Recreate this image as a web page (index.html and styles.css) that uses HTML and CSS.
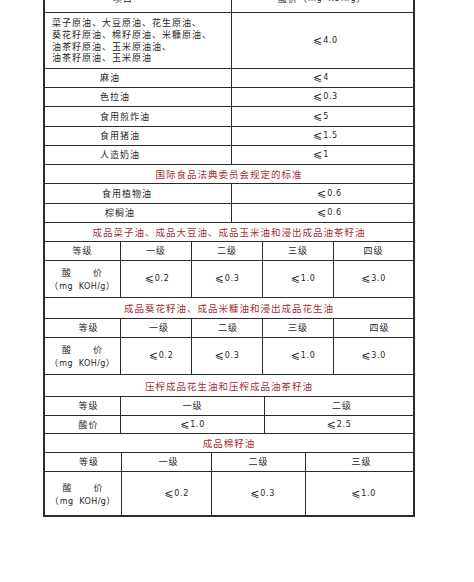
FILE: index.html
```html
<!DOCTYPE html>
<html lang="zh-CN">
<head>
<meta charset="utf-8">
<title>食用油酸价标准</title>
<link rel="stylesheet" href="styles.css">
</head>
<body>
<div class="sheet">
  <div class="row two h27">
    <div class="c l p68">项目</div>
    <div class="c l p46">酸价（<span class="n">mg&nbsp;&nbsp;KOH/g</span>）</div>
  </div>
  <div class="row two h56">
    <div class="c l p7 multi">菜子原油、大豆原油、花生原油、<br>葵花籽原油、棉籽原油、米糠原油、<br>油茶籽原油、玉米原油油、<br>油茶籽原油、玉米原油</div>
    <div class="c l p81 n"><span class="le">⩽</span>4.0</div>
  </div>
  <div class="row two h19">
    <div class="c l p55">麻油</div>
    <div class="c l p81 n"><span class="le">⩽</span>4</div>
  </div>
  <div class="row two h19">
    <div class="c l p55">色拉油</div>
    <div class="c l p81 n"><span class="le">⩽</span>0.3</div>
  </div>
  <div class="row two h20">
    <div class="c l p55">食用煎炸油</div>
    <div class="c l p81 n"><span class="le">⩽</span>5</div>
  </div>
  <div class="row two h19">
    <div class="c l p55">食用猪油</div>
    <div class="c l p81 n"><span class="le">⩽</span>1.5</div>
  </div>
  <div class="row two h19">
    <div class="c l p55">人造奶油</div>
    <div class="c l p81 n"><span class="le">⩽</span>1</div>
  </div>
  <div class="row one h19">
    <div class="c red">国际食品法典委员会规定的标准</div>
  </div>
  <div class="row two h20">
    <div class="c l p57">食用植物油</div>
    <div class="c l p85 n"><span class="le">⩽</span>0.6</div>
  </div>
  <div class="row two h19">
    <div class="c l p60">棕榈油</div>
    <div class="c l p85 n"><span class="le">⩽</span>0.6</div>
  </div>
  <div class="row one h19">
    <div class="c red">成品菜子油、成品大豆油、成品玉米油和浸出成品油茶籽油</div>
  </div>
  <div class="row five h19">
    <div class="c">等级</div>
    <div class="c">一级</div>
    <div class="c">二级</div>
    <div class="c">三级</div>
    <div class="c">四级</div>
  </div>
  <div class="row five h37">
    <div class="c acid"><span>酸<i class="gap"></i>价</span><span>（<span class="n">mg&nbsp;&nbsp;KOH/g</span>）</span></div>
    <div class="c n r2"><span class="le">⩽</span>0.2</div>
    <div class="c n"><span class="le">⩽</span>0.3</div>
    <div class="c n r10"><span class="le">⩽</span>1.0</div>
    <div class="c n"><span class="le">⩽</span>3.0</div>
  </div>
  <div class="row one h21">
    <div class="c red">成品葵花籽油、成品米糠油和浸出成品花生油</div>
  </div>
  <div class="row five h19">
    <div class="c r12">等级</div>
    <div class="c r6">一级</div>
    <div class="c r2">二级</div>
    <div class="c">三级</div>
    <div class="c r12">四级</div>
  </div>
  <div class="row five h37">
    <div class="c acid"><span>酸<i class="gap"></i>价</span><span>（<span class="n">mg&nbsp;&nbsp;KOH/g</span>）</span></div>
    <div class="c n r10"><span class="le">⩽</span>0.2</div>
    <div class="c n"><span class="le">⩽</span>0.3</div>
    <div class="c n r10"><span class="le">⩽</span>1.0</div>
    <div class="c n"><span class="le">⩽</span>3.0</div>
  </div>
  <div class="row one h22">
    <div class="c red">压榨成品花生油和压榨成品油茶籽油</div>
  </div>
  <div class="row three h19">
    <div class="c r12">等级</div>
    <div class="c">一级</div>
    <div class="c r6">二级</div>
  </div>
  <div class="row three h18">
    <div class="c r12">酸价</div>
    <div class="c n"><span class="le">⩽</span>1.0</div>
    <div class="c n"><span class="le">⩽</span>2.5</div>
  </div>
  <div class="row one h19">
    <div class="c red">成品棉籽油</div>
  </div>
  <div class="row four h19">
    <div class="c r12">等级</div>
    <div class="c r4">一级</div>
    <div class="c">二级</div>
    <div class="c r4">三级</div>
  </div>
  <div class="row four h43 last">
    <div class="c acid"><span>酸<i class="gap"></i>价</span><span>（<span class="n">mg&nbsp;&nbsp;KOH/g</span>）</span></div>
    <div class="c n r20"><span class="le">⩽</span>0.2</div>
    <div class="c n r8"><span class="le">⩽</span>0.3</div>
    <div class="c n r8"><span class="le">⩽</span>1.0</div>
  </div>
</div>
</body>
</html>
```
FILE: styles.css
```css
html, body {
  margin: 0;
  padding: 0;
  background: #ffffff;
}

body {
  font-family: "Noto Sans CJK SC", "DejaVu Sans", sans-serif;
  font-size: 9px;
  letter-spacing: 1px;
  color: #1f1f1f;
  overflow: hidden;
}

.sheet {
  margin: -16px 0 0 43px;
  width: 372px;
  border: 2px solid #2b2b2b;
  box-sizing: border-box;
}

.row {
  display: grid;
  box-sizing: border-box;
  border-bottom: 1px solid #2b2b2b;
}

.row.last {
  border-bottom: none;
}

.one { grid-template-columns: 1fr; }
.two { grid-template-columns: 187px 1fr; }
.five { grid-template-columns: 76px 71px 71px 71px 1fr; }
.three { grid-template-columns: 76px 144px 1fr; }
.four { grid-template-columns: 77px 90px 94px 1fr; }

.h18 { height: 18px; }
.h19 { height: 19px; }
.h20 { height: 20px; }
.h21 { height: 21px; }
.h22 { height: 22px; }
.h27 { height: 27px; }
.h37 { height: 37px; }
.h43 { height: 43px; }
.h56 { height: 56px; }

.c {
  box-sizing: border-box;
  border-right: 1px solid #2b2b2b;
  display: flex;
  align-items: center;
  justify-content: center;
  white-space: nowrap;
  line-height: 12px;
}

.c:last-child {
  border-right: none;
}

.l { justify-content: flex-start; }
.p7 { padding-left: 7px; }
.p46 { padding-left: 46px; }
.p55 { padding-left: 55px; }
.p57 { padding-left: 57px; }
.p60 { padding-left: 60px; }
.p68 { padding-left: 68px; }
.p81 { padding-left: 81px; }
.p85 { padding-left: 85px; }

.r2 { padding-left: 2px; }
.r4 { padding-left: 4px; }
.r6 { padding-left: 6px; }
.r8 { padding-left: 8px; }
.r10 { padding-left: 10px; }
.r12 { padding-left: 12px; }
.r20 { padding-left: 20px; }

.multi {
  line-height: 11.7px;
}

.n {
  font-family: "DejaVu Sans", sans-serif;
  font-size: 8px;
  letter-spacing: 0.6px;
}

.le {
  font-size: 11px;
  letter-spacing: 0;
  margin-right: 1px;
}

.red {
  color: #a2303a;
  font-size: 9.5px;
  letter-spacing: 1px;
}

.acid {
  flex-direction: column;
  line-height: 13px;
  padding-top: 1px;
}

.acid .n {
  letter-spacing: 0.4px;
}

.gap {
  display: inline-block;
  width: 21px;
}
```
